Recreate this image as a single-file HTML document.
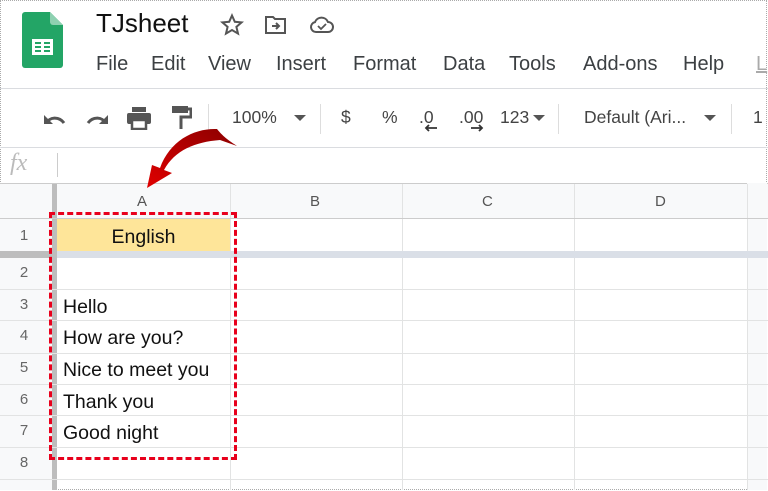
<!DOCTYPE html>
<html><head><style>
*{margin:0;padding:0;box-sizing:border-box}
body{width:768px;height:491px;background:#fff;position:relative;overflow:hidden;font-family:"Liberation Sans",Arial,sans-serif;color:#3c4043}
.a{position:absolute}
.menu span{position:absolute;top:53px;font-size:20px;color:#3c4043}
.tb{position:absolute;top:107px;font-size:17.5px;color:#444}
.hl{position:absolute;height:1px;background:#e2e3e3}
.vl{position:absolute;width:1px;background:#e2e3e3}
.rn{position:absolute;left:0;width:48px;text-align:center;font-size:15px;color:#666}
.ct{position:absolute;left:63px;font-size:19.5px;color:#111}
</style></head><body>
<div class="a" style="left:0;top:0;width:767px;height:490px;border:1px dotted #aaa"></div>
<svg class="a" style="left:22px;top:12px" width="42" height="56" viewBox="0 0 42 56">
<path d="M3 0H28L41 13V53a3 3 0 0 1-3 3H3a3 3 0 0 1-3-3V3a3 3 0 0 1 3-3z" fill="#23a566"/>
<path d="M28 0L41 13H31a3 3 0 0 1-3-3z" fill="#8ed1b1"/>
<rect x="10" y="27" width="21" height="16" fill="#fff"/>
<g fill="#23a566"><rect x="13" y="30" width="6" height="2"/><rect x="22" y="30" width="6" height="2"/><rect x="13" y="34" width="6" height="2"/><rect x="22" y="34" width="6" height="2"/><rect x="13" y="38" width="6" height="2"/><rect x="22" y="38" width="6" height="2"/></g>
</svg>
<div class="a" style="left:96px;top:8px;font-size:26px;color:#111">TJsheet</div>
<svg class="a" style="left:220px;top:13px" width="24" height="24" viewBox="0 0 24 24"><path d="M12 2.5l2.8 6.3 6.8.6-5.2 4.5 1.6 6.7L12 17l-6 3.6 1.6-6.7-5.2-4.5 6.8-.6z" fill="none" stroke="#555" stroke-width="2"/></svg>
<svg class="a" style="left:264px;top:14px" width="24" height="22" viewBox="0 0 24 22"><path d="M2 3h7l2 2h10v14H2z" fill="none" stroke="#555" stroke-width="2"/><path d="M8 12h7M12 9l3 3-3 3" fill="none" stroke="#555" stroke-width="2"/></svg>
<svg class="a" style="left:309px;top:14px" width="26" height="22" viewBox="0 0 26 22"><path d="M7 18a5 5 0 0 1-1-9.9A7 7 0 0 1 19 8a4.5 4.5 0 0 1 0 10z" fill="none" stroke="#555" stroke-width="2"/><path d="M9 12l3 3 5-5" fill="none" stroke="#555" stroke-width="1.8"/></svg>
<div class="menu">
<span style="left:96px">File</span><span style="left:151px">Edit</span><span style="left:208px">View</span><span style="left:276px">Insert</span><span style="left:353px">Format</span><span style="left:443px">Data</span><span style="left:509px">Tools</span><span style="left:583px">Add-ons</span><span style="left:683px">Help</span><span style="left:756px;color:#aaa;text-decoration:underline">L</span>
</div>
<div class="hl" style="left:0;top:88px;width:768px;background:#dadce0"></div>
<svg class="a" style="left:42px;top:109px" width="26" height="20" viewBox="0 0 26 20"><path d="M5 14c2-6 12-7 17 0" fill="none" stroke="#555" stroke-width="3"/><path d="M2 6v9h9z" fill="#555"/></svg>
<svg class="a" style="left:84px;top:109px" width="26" height="20" viewBox="0 0 26 20"><path d="M21 14c-2-6-12-7-17 0" fill="none" stroke="#555" stroke-width="3"/><path d="M24 6v9h-9z" fill="#555"/></svg>
<svg class="a" style="left:126px;top:106px" width="26" height="24" viewBox="0 0 26 24"><rect x="6" y="1" width="14" height="5" fill="#555"/><rect x="1" y="7" width="24" height="11" rx="2" fill="#555"/><rect x="6" y="14" width="14" height="9" fill="#fff" stroke="#555" stroke-width="2.5"/></svg>
<svg class="a" style="left:170px;top:105px" width="22" height="26" viewBox="0 0 22 26"><rect x="2" y="1" width="16" height="7" fill="#555"/><path d="M18 4h3v8h-10v12" fill="none" stroke="#555" stroke-width="3"/></svg>
<div class="vl" style="left:208px;top:104px;height:30px;background:#ddd"></div>
<div class="tb" style="left:232px">100%</div>
<svg class="a" style="left:294px;top:115px" width="12" height="7"><path d="M0 0h12L6 6z" fill="#555"/></svg>
<div class="vl" style="left:320px;top:104px;height:30px;background:#ddd"></div>
<div class="tb" style="left:341px">$</div>
<div class="tb" style="left:382px">%</div>
<div class="tb" style="left:419px">.0</div>
<svg class="a" style="left:424px;top:124px" width="14" height="8"><path d="M13 4H2M5 1L2 4l3 3" fill="none" stroke="#333" stroke-width="1.8"/></svg>
<div class="tb" style="left:459px">.00</div>
<svg class="a" style="left:470px;top:124px" width="14" height="8"><path d="M1 4h11M9 1l3 3-3 3" fill="none" stroke="#333" stroke-width="1.8"/></svg>
<div class="tb" style="left:500px">123</div>
<svg class="a" style="left:533px;top:115px" width="12" height="7"><path d="M0 0h12L6 6z" fill="#555"/></svg>
<div class="vl" style="left:558px;top:104px;height:30px;background:#ddd"></div>
<div class="tb" style="left:584px">Default (Ari...</div>
<svg class="a" style="left:704px;top:115px" width="12" height="7"><path d="M0 0h12L6 6z" fill="#555"/></svg>
<div class="vl" style="left:731px;top:104px;height:30px;background:#ddd"></div>
<div class="tb" style="left:753px">1</div>
<div class="hl" style="left:0;top:147px;width:768px;background:#dadce0"></div>
<div class="a" style="left:10px;top:150px;font-family:'Liberation Serif',serif;font-style:italic;font-size:24px;color:#bbb">fx</div>
<div class="vl" style="left:57px;top:153px;height:24px;background:#ccc"></div>
<div class="a" style="left:0;top:183px;width:768px;height:36px;background:#f8f9fa"></div>
<div class="hl" style="left:0;top:183px;width:768px;background:#ccc"></div>
<div class="a" style="left:0;top:218px;width:57px;height:272px;background:#f8f9fa"></div>
<div class="a" style="left:747px;top:183px;width:20px;height:307px;background:#f8f9fa"></div>
<div class="a" style="left:52px;top:184px;width:5px;height:306px;background:#bdbdbd"></div>
<div class="a" style="left:137px;top:193px;font-size:15px;color:#555">A</div>
<div class="a" style="left:310px;top:193px;font-size:15px;color:#555">B</div>
<div class="a" style="left:482px;top:193px;font-size:15px;color:#555">C</div>
<div class="a" style="left:655px;top:193px;font-size:15px;color:#555">D</div>
<div class="vl" style="left:230px;top:184px;height:306px"></div>
<div class="vl" style="left:402px;top:184px;height:306px"></div>
<div class="vl" style="left:574px;top:184px;height:306px"></div>
<div class="vl" style="left:747px;top:184px;height:306px"></div>
<div class="hl" style="left:0;top:218px;width:768px;background:#ccc"></div>
<div class="a" style="left:57px;top:219px;width:173px;height:32px;background:#fee599"></div>
<div class="a" style="left:0;top:251px;width:52px;height:7px;background:#bdbdbd"></div>
<div class="a" style="left:57px;top:251px;width:711px;height:7px;background:#dadfe7"></div>
<div class="hl" style="left:0;top:289px;width:768px"></div>
<div class="hl" style="left:0;top:320px;width:768px"></div>
<div class="hl" style="left:0;top:353px;width:768px"></div>
<div class="hl" style="left:0;top:384px;width:768px"></div>
<div class="hl" style="left:0;top:415px;width:768px"></div>
<div class="hl" style="left:0;top:447px;width:768px"></div>
<div class="hl" style="left:0;top:479px;width:768px"></div>
<div class="rn" style="top:227px">1</div>
<div class="rn" style="top:264px">2</div>
<div class="rn" style="top:296px">3</div>
<div class="rn" style="top:327px">4</div>
<div class="rn" style="top:359px">5</div>
<div class="rn" style="top:391px">6</div>
<div class="rn" style="top:422px">7</div>
<div class="rn" style="top:454px">8</div>
<div class="a" style="left:57px;top:226px;width:173px;text-align:center;font-size:19.5px;color:#111">English</div>
<div class="ct" style="top:296px">Hello</div>
<div class="ct" style="top:327px">How are you?</div>
<div class="ct" style="top:359px">Nice to meet you</div>
<div class="ct" style="top:391px">Thank you</div>
<div class="ct" style="top:422px">Good night</div>
<div class="a" style="left:49px;top:212px;width:188px;height:248px;border:3px dashed #e8001c"></div>
<svg class="a" style="left:0;top:0" width="768" height="491">
<defs><linearGradient id="g" x1="1" y1="0" x2="0" y2="1"><stop offset="0" stop-color="#8a0000"/><stop offset="1" stop-color="#e00000"/></linearGradient></defs>
<path d="M237 146C225 138 222 135 217 129C195 128 170 140 160 168L152 165L147 188L172 173L164 170C175 150 195 142 220 140Z" fill="url(#g)"/>
</svg>
</body></html>
